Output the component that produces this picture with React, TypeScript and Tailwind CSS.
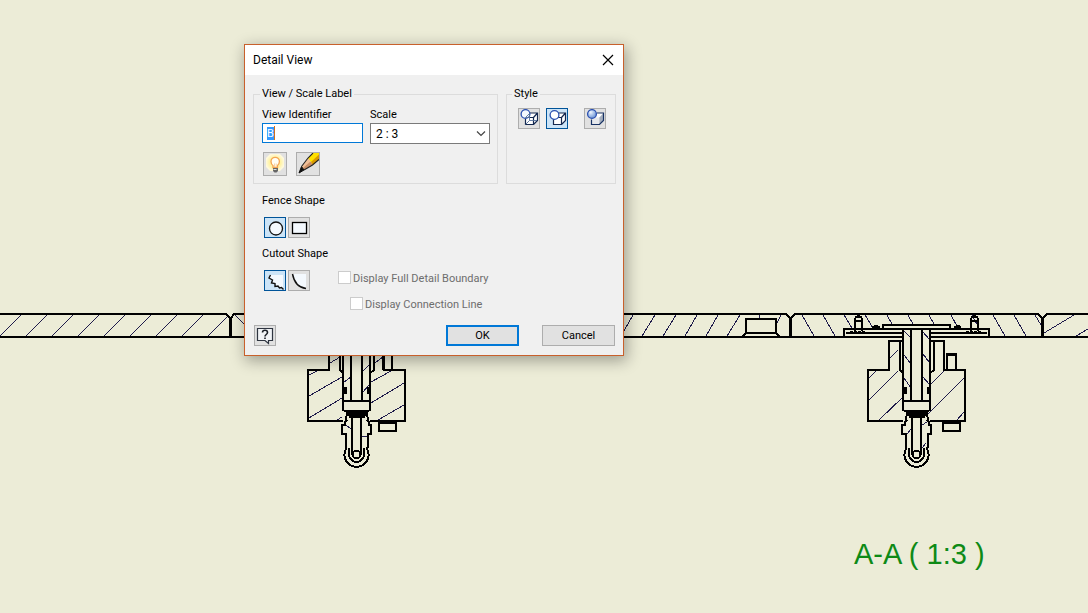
import { useEffect, useRef, type ReactNode } from "react";

const INK = "#000000";
const HATCH = "#1f1b4b";

type Line = [number, number, number, number];

function Hatches({ lines }: { lines: Line[] }) {
  return (
    <g stroke={HATCH} strokeWidth={1}>
      {lines.map(([x1, y1, x2, y2]) => (
        <line key={`${x1}-${y1}-${x2}`} x1={x1} y1={y1} x2={x2} y2={y2} />
      ))}
    </g>
  );
}

/* Section of a caster mount; coordinates are local, x = 0 at the left edge of the block. */
function Caster({ x, boltShift, hatches }: { x: number; boltShift: number; hatches: Line[] }) {
  return (
    <g transform={`translate(${x} 0)`}>
      <Hatches lines={hatches} />
      <g fill="none" stroke={INK} strokeWidth={2}>
        <path d="M35 421H0V370H21V341H35M62 421H97V370H76V341H62" />
        <path d="M32 342V370L35 373M66 341V370L62 373" />
        <path d="M35 329V410L37 411H60L62 410V329M43 329V401M54 329V401" />
        <path d="M35 401H62" />
        <path d="M39 412L38 421M59 412L60 421" />
        <path d="M39 420L37 422V425H34V434H38V448M59 420L61 422V425H63V434H60V448" />
        <path d="M44 417V455M53 417V455" />
        <path d="M41 417H57" />
      </g>
      <g transform={`translate(${-boltShift} 0)`}>
        <path d="M79 370V354H88V370M75 422V431H92V422" fill="none" stroke={INK} strokeWidth={2} />
        <rect x="78" y="353" width="11" height="3" fill={INK} />
        <rect x="75" y="421" width="17" height="3" fill={INK} />
      </g>
      <g fill={INK}>
        <rect x="35" y="387" width="4" height="7" />
        <rect x="59" y="387" width="4" height="7" />
        <rect x="39" y="411" width="20" height="5" />
      </g>
      <g fill="none" stroke={INK} strokeWidth={2}>
        <path d="M38 447V449A12 12 0 1 0 59 449V447" />
        <path d="M41 448V454A7.5 8 0 0 0 56 454V448" />
        <circle cx="48.5" cy="454.500" r="3.700" />
      </g>
    </g>
  );
}

function Bolt({ x }: { x: number }) {
  return (
    <g transform={`translate(${x} 0)`}>
      <path d="M-3 331V319L-2 317H3L4 319V331M-4 321H4" fill="none" stroke={INK} strokeWidth={2} />
      <rect x="-1" y="315" width="3" height="3" fill={INK} />
      <path d="M-8 331H8M-6 332H7" stroke={INK} strokeWidth={1} strokeDasharray="3 1" />
    </g>
  );
}

const railHatches: Line[] = [
  [0, 336, 21, 315], [26, 336, 47, 315], [52, 336, 73, 315], [78, 336, 99, 315], [104, 336, 125, 315],
  [130, 336, 151, 315], [156, 336, 177, 315], [182, 336, 203, 315], [208, 336, 228, 316], [235, 315, 256, 336],
  [621, 336, 633, 315], [642, 336, 655, 315], [663, 336, 676, 315], [685, 336, 697, 315], [706, 336, 718, 315],
  [727, 336, 740, 315], [760, 315, 759, 318], [781, 315, 777, 323],
  [802, 315, 814, 336], [823, 315, 835, 336], [844, 315, 852, 328], [865, 315, 873, 328], [887, 315, 892, 324],
  [908, 315, 913, 324], [929, 315, 934, 324], [951, 315, 958, 328], [972, 315, 979, 328], [993, 315, 1005, 336],
  [1014, 315, 1026, 336], [1035, 315, 1041, 325], [1044, 333, 1074, 315], [1076, 336, 1088, 329],
];

const leftHatches: Line[] = [
  [1, 375, 9, 371], [1, 396, 34, 377], [1, 418, 34, 398], [29, 420, 34, 417], [22, 363, 32, 357],
  [63, 382, 83, 371], [63, 403, 96, 383], [70, 420, 96, 405], [67, 363, 76, 356],
  [36, 382, 43, 377], [55, 371, 61, 365], [55, 392, 61, 385], [38, 425, 43, 429], [54, 436, 59, 437],
];

const rightHatches: Line[] = [
  [1, 378, 8, 371], [1, 400, 30, 371], [11, 420, 35, 397], [22, 358, 30, 350], [63, 384, 76, 371],
  [59, 415, 96, 378], [89, 420, 96, 412],
  [36, 331, 43, 338], [36, 355, 43, 364], [36, 378, 43, 388], [55, 332, 61, 339], [55, 354, 61, 362],
  [55, 377, 61, 384], [39, 434, 43, 429], [54, 448, 58, 443], [54, 425, 59, 422],
];

function SectionDrawing() {
  return (
    <svg
      className="absolute left-0 top-0"
      width="1088"
      height="613"
      viewBox="0 0 1088 613"
      shapeRendering="crispEdges"
      aria-hidden="true"
    >
      <Hatches lines={railHatches} />
      <g fill="none" stroke={INK} strokeWidth={2}>
        <path d="M0 314H226L230 318H231L234 314H786L790 318H791L795 314H1038L1042 318H1043L1047 314H1088" />
        <path d="M0 337H1088" />
        <path d="M742 337L746 333V319H776V333L780 337M746 333H776" />
        <path d="M844 337V329H989V337M846 333H903M931 333H987" />
        <path d="M883 329V325H950V329" />
      </g>
      <path d="M230.5 318V337M790.5 318V337M1042.5 318V337" stroke={INK} strokeWidth={3} />
      <rect x="904" y="330" width="26" height="9" fill="#ececd7" />
      <path d="M872 328V326H874V325H878V326H880V329H872ZM954 328V326H956V325H960V326H961V329H954Z" fill={INK} />
      <Bolt x={858} />
      <Bolt x={974} />
      <Caster x={308} boltShift={4} hatches={leftHatches} />
      <Caster x={868} boltShift={0} hatches={rightHatches} />
    </svg>
  );
}

function IconButton({
  label, active = false, large = false, children,
}: { label: string; active?: boolean; large?: boolean; children: ReactNode }) {
  const size = large ? "h-6 w-6" : "h-[21px] w-[22px]";
  const tone = active ? "border-[#005499] bg-[#cce4f7]" : "border-[#adadad] bg-[#e1e1e1]";
  return (
    <button
      type="button"
      aria-label={label}
      aria-pressed={active}
      className={`flex shrink-0 items-center justify-center border ${size} ${tone}`}
    >
      {children}
    </button>
  );
}

function Icon({ large = false, children }: { large?: boolean; children: ReactNode }) {
  const width = large ? 22 : 20;
  const height = large ? 22 : 19;
  return (
    <svg className="shrink-0" width={width} height={height} viewBox={`0 0 ${width} ${height}`} fill="none" aria-hidden="true">
      {children}
    </svg>
  );
}

function BulbIcon() {
  return (
    <Icon large>
      <defs>
        <radialGradient id="glow">
          <stop offset="0" stopColor="#fff39a" />
          <stop offset="0.65" stopColor="#fff3a6" />
          <stop offset="1" stopColor="#fff9dc" />
        </radialGradient>
      </defs>
      <path d="M6 1H16L20 5V14L16 18H6L2 14V5Z" fill="url(#glow)" />
      <path d="M9 14.500V12.500C7.500 11.500 7 10 7 8.500A4.200 4.200 0 0 1 15.400 8.500C15.400 10 14.800 11.500 13.500 12.500V14.500Z" fill="#fffef4" stroke="#f5a552" strokeWidth="1.300" />
      <path d="M10.500 14V10.500M12.200 14V10.500" stroke="#f8c890" strokeWidth="0.800" />
      <path d="M9 15H14V18L12.500 19.500H10.500L9 18Z" fill="#666" />
      <path d="M9.500 16.500H12.500" stroke="#ddd" />
    </Icon>
  );
}

function PencilIcon() {
  return (
    <Icon large>
      <path d="M11 5L16 0H22V6.500L15.500 12Z" fill="#ffe100" />
      <path d="M14 9L22 1.500V6.500L15.500 12Z" fill="#d99a00" />
      <path d="M11 5L15.500 11.500L7 17L4.500 13.500Z" fill="#efbf98" />
      <path d="M13.500 8.500L15.500 11.500L7 17L6 15Z" fill="#c98e66" />
      <path d="M4.500 13.500L7 17L2 20Z" fill="#111" stroke="#111" />
      <path d="M4.500 13.500L11 5L16 0M7 17L15.500 12L22 6.500" stroke="#222" strokeWidth="1.100" />
    </Icon>
  );
}

function StyleIcon({ kind }: { kind: "hidden" | "visible" | "shaded" }) {
  const ball = { hidden: [6.5, 5], visible: [7.5, 6], shaded: [7, 5] }[kind];
  const ballFill = { hidden: "#f4f8fd", visible: "#ffffff", shaded: "url(#ball)" }[kind];
  return (
    <Icon>
      <defs>
        <radialGradient id="ball" cx="0.35" cy="0.3" r="0.75">
          <stop offset="0" stopColor="#f2f7ff" />
          <stop offset="0.5" stopColor="#a8c2ea" />
          <stop offset="1" stopColor="#6a90d0" />
        </radialGradient>
      </defs>
      {kind === "shaded" ? (
        <>
          <path d="M7 8.500H14.500V15.500H7Z" fill="#e6e8ec" />
          <path d="M8 8.500L11 4H18.500L14.500 8.500Z" fill="#ffffff" />
          <path d="M14.500 8.500L18.500 4V11.500L14.500 15.500Z" fill="#a3adbd" />
          <path d="M6.500 10.500V15.500H14.500L18.500 11.500V4H12" stroke="#183264" strokeWidth="1.200" />
        </>
      ) : (
        <>
          <path d="M6.500 8.500L11 4H18.500V11.500L14.500 15.500H6.500Z" fill="#fff" />
          <path d="M6.500 10V15.500H14.500V8.500H9M11 4H18.500V11.500L14.500 15.500M14.500 8.500L18.500 4" stroke="#14284f" strokeWidth="1.200" />
        </>
      )}
      <circle cx={ball[0]} cy={ball[1]} r="4.400" fill={ballFill} stroke="#2b50b0" strokeWidth="1.300" />
      {kind === "hidden" && <path d="M10.500 4V11.500H18M10.500 11.500L6.500 15.500M6.500 8.500H10M6.500 8.500L10.500 4.500" stroke="#56709a" strokeWidth="0.900" />}
    </Icon>
  );
}

function Option({ id, label }: { id: string; label: string }) {
  return (
    <div className="flex h-[13px] items-start gap-0.5">
      <input
        id={id}
        type="checkbox"
        disabled
        className="h-[13px] w-[13px] shrink-0 appearance-none border border-[#cccccc] bg-white"
      />
      <label htmlFor={id} className="whitespace-nowrap text-[#6d6d6d]">{label}</label>
    </div>
  );
}

function DetailViewDialog() {
  const identifier = useRef<HTMLInputElement>(null);
  useEffect(() => {
    identifier.current?.focus();
    identifier.current?.select();
  }, []);

  return (
    <section
      role="dialog"
      aria-labelledby="dialog-title"
      className="absolute left-[244px] top-[44px] w-[380px] border border-[#c8602c] bg-[#f0f0f0] font-['Roboto','Noto_Sans',sans-serif] text-[11px] leading-4 text-black shadow-[2px_4px_14px_1px_rgba(0,0,0,0.32)]"
    >
      <header className="flex h-[30px] items-center justify-between bg-white pl-2 pr-[7px]">
        <h1 id="dialog-title" className="text-[12px]">Detail View</h1>
        <button type="button" aria-label="Close" className="flex h-4 w-4 items-center justify-center">
          <svg width="12" height="12" viewBox="0 0 12 12" aria-hidden="true">
            <path d="M1 1L11 11M11 1L1 11" stroke="#000" strokeWidth="1.200" />
          </svg>
        </button>
      </header>

      <form className="pb-[9px] pt-[11px]" onSubmit={(event) => event.preventDefault()}>
        <div className="flex gap-2 pl-2 pr-[7px]">
          <fieldset className="min-w-0 flex-1 border border-[#dcdcdc] pb-[7px] pl-2 pr-[7px]">
            <legend className="-ml-0.5 px-0.5">View / Scale Label</legend>
            <div className="flex gap-[7px] pt-[5px]">
              <div className="flex w-[101px] flex-col">
                <label htmlFor="identifier">View Identifier</label>
                <div className="relative">
                  <input
                    id="identifier"
                    ref={identifier}
                    defaultValue="B"
                    className="block h-5 w-full border border-[#0078d7] bg-white px-1 outline-none selection:bg-[#3399ff] selection:text-white"
                  />
                  <span className="absolute left-3 top-[3px] h-3.5 w-px bg-[#d0701c]" />
                </div>
              </div>
              <div className="flex flex-1 flex-col">
                <label htmlFor="scale">Scale</label>
                <div className="relative">
                  <select
                    id="scale"
                    defaultValue="2 : 3"
                    className="block h-[21px] w-full appearance-none border border-[#7a7a7a] bg-white pl-[5px] text-[12px]"
                  >
                    <option>2 : 3</option>
                  </select>
                  <svg className="pointer-events-none absolute right-1 top-2" width="10" height="6" viewBox="0 0 10 6" aria-hidden="true">
                    <path d="M1 .5L5 4.500L9 .5" fill="none" stroke="#444" strokeWidth="1.200" />
                  </svg>
                </div>
              </div>
            </div>
            <div className="flex gap-[9px] pl-px pt-2">
              <IconButton label="Toggle label visibility" large><BulbIcon /></IconButton>
              <IconButton label="Edit view label" large><PencilIcon /></IconButton>
            </div>
          </fieldset>

          <fieldset className="w-[110px] border border-[#dcdcdc] pl-[11px]">
            <legend className="-ml-1.5 px-0.5">Style</legend>
            <div className="flex pt-1.5">
              <IconButton label="Hidden line"><StyleIcon kind="hidden" /></IconButton>
              <div className="ml-1.5 mr-4">
                <IconButton label="Hidden line removed" active><StyleIcon kind="visible" /></IconButton>
              </div>
              <IconButton label="Shaded"><StyleIcon kind="shaded" /></IconButton>
            </div>
          </fieldset>
        </div>

        <div className="pl-[17px] pt-[9px]">
          <h2>Fence Shape</h2>
          <div className="flex gap-0.5 pl-0.5 pt-2">
            <IconButton label="Circular" active>
              <Icon><circle cx="11" cy="10.500" r="6.500" fill="#f4f9fe" stroke="#111" strokeWidth="1.300" /></Icon>
            </IconButton>
            <IconButton label="Rectangular">
              <Icon><rect x="3.500" y="4.500" width="14" height="11" fill="#f4f9fe" stroke="#000" strokeWidth="1.300" /></Icon>
            </IconButton>
          </div>
          <h2 className="pt-2">Cutout Shape</h2>
          <div className="flex pl-0.5 pt-2">
            <div className="flex gap-0.5">
              <IconButton label="Jagged" active>
                <Icon>
                  <path d="M5 4H18V18H16L14 16L11 15V13L8 12V9L4 7Z" fill="#f4f9fe" />
                  <path d="M5.500 4L4 7L7.500 9L6.500 12L10 12.500V15.500L13 15L14.500 17L16.500 16.500L18.500 18.500" stroke="#111" strokeWidth="1.400" />
                </Icon>
              </IconButton>
              <IconButton label="Smooth">
                <Icon>
                  <path d="M4 3H17V17C9 16 5 10 4 3Z" fill="#f4f9fe" />
                  <path d="M3.500 3C5 11 9 16.500 17 17.500" stroke="#111" strokeWidth="1.400" />
                </Icon>
              </IconButton>
            </div>
            <div className="flex flex-col gap-[13px] pl-7 pt-px">
              <Option id="full-boundary" label="Display Full Detail Boundary" />
              <div className="pl-3"><Option id="connection-line" label="Display Connection Line" /></div>
            </div>
          </div>
        </div>

        <footer className="flex items-center pl-[9px] pr-2 pt-[15px]">
          <IconButton label="Help">
            <Icon>
              <path d="M2.500 2.500H17.500V14.500H13.500V17.500L10 14.500H2.500Z" fill="#f1f3f6" stroke="#2e3440" strokeWidth="1.200" />
              <path d="M7.500 6.500C7.500 3.500 12.500 3.500 12.500 6.500C12.500 8.500 10 8.500 10 10.500M10 11.500V13" stroke="#1c2028" strokeWidth="1.600" />
            </Icon>
          </IconButton>
          <div className="ml-auto flex gap-[23px]">
            <button type="submit" className="h-[21px] w-[73px] border-2 border-[#0078d7] bg-[#e1e1e1]">OK</button>
            <button type="button" className="h-[21px] w-[73px] border border-[#adadad] bg-[#e1e1e1]">Cancel</button>
          </div>
        </footer>
      </form>
    </section>
  );
}

export default function App() {
  return (
    <main className="relative min-h-screen overflow-hidden bg-[#ececd7]">
      <SectionDrawing />
      <p className="absolute left-[854px] top-[538px] whitespace-pre font-['Liberation_Sans',Arial,sans-serif] text-[29px] leading-8 text-[#0e8a16]">
        A-A ( 1:3 )
      </p>
      <DetailViewDialog />
    </main>
  );
}
